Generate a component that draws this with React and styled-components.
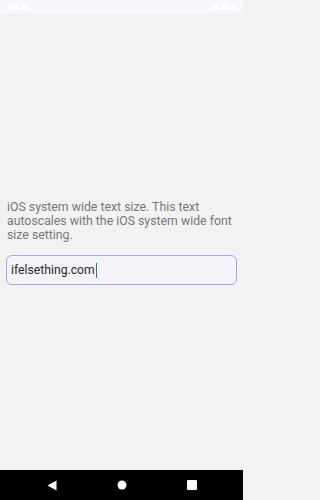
import React from "react";
import styled, { createGlobalStyle } from "styled-components";

const Global = createGlobalStyle`
  html, body { margin: 0; padding: 0; height: 100%; background: #f2f2f2; }
  #root { height: 100%; }
  * { box-sizing: border-box; }
`;

const Screen = styled.div`
  width: 243px;
  height: 500px;
  display: flex;
  flex-direction: column;
  background: #f2f2f2;
  font-family: Roboto, "Liberation Sans", sans-serif;
`;

const StatusBar = styled.div`
  height: 14px;
  flex: none;
  background: #f7f8fd;
  display: flex;
  align-items: center;
  justify-content: space-between;
  padding: 0 8px;
`;

const StatusIcons = styled.div`
  display: flex;
  gap: 3px;
  align-items: center;
`;

const Faint = styled.div`
  width: ${(p) => p.$w}px;
  height: 6px;
  border-radius: 1px;
  background: #ffffff;
  opacity: 0.9;
`;

const Content = styled.main`
  flex: 1;
  display: flex;
  flex-direction: column;
  justify-content: center;
  padding: 1px 6px 0;
  gap: 13px;
`;

const Caption = styled.p`
  margin: 0;
  padding: 0 1px;
  font-size: 12.3px;
  line-height: 14.3px;
  color: #777777;
`;

const Field = styled.div`
  height: 30px;
  border: 1px solid #aaa5e8;
  border-radius: 6px;
  background: #f4f3f9;
  display: flex;
  align-items: center;
  padding: 0 4px;
  font-size: 12.2px;
  color: #2b2b2b;
`;

const Caret = styled.span`
  display: inline-block;
  width: 1.5px;
  height: 15px;
  background: #2f7a6a;
  margin-left: 1px;
`;

const NavBar = styled.nav`
  height: 30px;
  flex: none;
  background: #000;
  display: flex;
  align-items: center;
  justify-content: center;
  gap: 60px;
`;

export default function App() {
  return (
    <>
      <Global />
      <Screen>
        <StatusBar>
          <StatusIcons>
            <Faint $w={10} />
            <Faint $w={6} />
          </StatusIcons>
          <StatusIcons>
            <Faint $w={6} />
            <Faint $w={6} />
            <Faint $w={4} />
          </StatusIcons>
        </StatusBar>
        <Content>
          <Caption>
            iOS system wide text size. This text autoscales with the iOS system wide font size setting.
          </Caption>
          <Field>
            ifelsething.com
            <Caret />
          </Field>
        </Content>
        <NavBar>
          <svg width="10" height="11" viewBox="0 0 10 11">
            <path d="M9.5 0.5 L9.5 10.5 L0.5 5.5 Z" fill="#fff" />
          </svg>
          <svg width="10" height="10" viewBox="0 0 10 10">
            <circle cx="5" cy="5" r="4.5" fill="#fff" />
          </svg>
          <svg width="10" height="10" viewBox="0 0 10 10">
            <rect x="0" y="0" width="10" height="10" rx="1.2" fill="#fff" />
          </svg>
        </NavBar>
      </Screen>
    </>
  );
}
